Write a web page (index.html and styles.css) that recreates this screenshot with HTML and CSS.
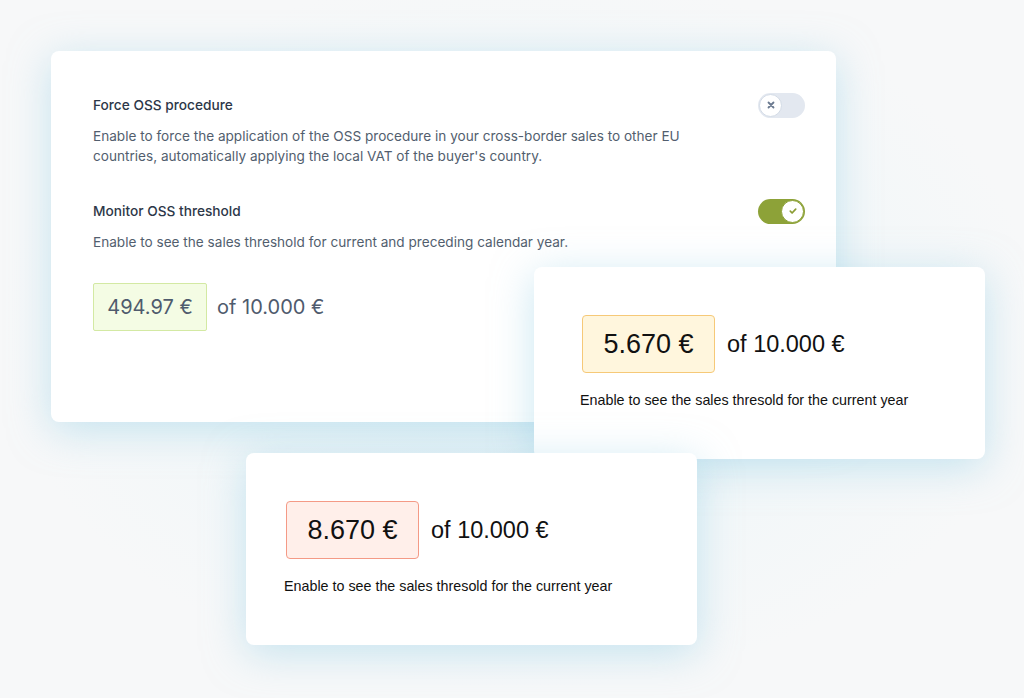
FILE: index.html
```html
<!DOCTYPE html>
<html>
	<head>
		<meta charset="UTF-8">
		<title>OSS settings</title>
		<link rel="stylesheet" href="styles.css">
	</head>
	<body>
		<div class="stage">
			<div class="card card-main">
				<div class="row">
					<div class="title">Force OSS procedure</div>
					<div class="toggle">
						<span class="knob">
							<svg width="10" height="10" viewBox="0 0 10 10"><path d="M2.5 2.5l5 5M7.5 2.5l-5 5" stroke="#6b7a90" stroke-width="1.8" stroke-linecap="round"/></svg>
						</span>
					</div>
				</div>
				<p class="desc">Enable to force the application of the OSS procedure in your cross-border sales to other EU countries, automatically applying the local VAT of the buyer's country.</p>

				<div class="row row2">
					<div class="title">Monitor OSS threshold</div>
					<div class="toggle on">
						<span class="knob">
							<svg width="10" height="10" viewBox="0 0 10 10"><path d="M2.3 5.2l1.8 1.8 3.6-3.8" fill="none" stroke="#8b9c33" stroke-width="1.7" stroke-linecap="round" stroke-linejoin="round"/></svg>
						</span>
					</div>
				</div>
				<p class="desc">Enable to see the sales threshold for current and preceding calendar year.</p>

				<div class="amount">
					<span class="box box-green">494.97 €</span>
					<span class="of">of 10.000 €</span>
				</div>
			</div>

			<div class="card card-small card-yellow">
				<div class="amount amount-lg">
					<span class="box box-yellow">5.670 €</span>
					<span class="of">of 10.000 €</span>
				</div>
				<p class="note">Enable to see the sales thresold for the current year</p>
			</div>

			<div class="card card-small card-red">
				<div class="amount amount-lg">
					<span class="box box-red">8.670 €</span>
					<span class="of">of 10.000 €</span>
				</div>
				<p class="note">Enable to see the sales thresold for the current year</p>
			</div>
		</div>
	</body>
</html>
```

FILE: styles.css
```css
*{padding:0;margin:0;box-sizing:border-box;}
body{background:#f7f8f9;font-family:Inter,"Liberation Sans",sans-serif;overflow:hidden;}
.stage{position:relative;width:1024px;height:698px;background:radial-gradient(ellipse 520px 360px at 520px 330px,#e8f3f8 0%,#f2f7f9 60%,#f7f8f9 100%);}

.card{position:absolute;background:#fff;border-radius:8px;box-shadow:0 8px 40px rgba(150,208,230,0.5);}
.card-main{left:51px;top:51px;width:785px;height:371px;padding:42px 31px 0 42px;}
.card-small{width:451px;height:192px;padding:48px 0 0 48px;font-family:"Liberation Sans",Arial,sans-serif;}
.card-yellow{left:534px;top:267px;}
.card-red{left:246px;top:453px;padding-left:40px;}

.row{display:flex;align-items:center;justify-content:space-between;height:24px;}
.row2{margin-top:33px;}
.title{font-size:13.7px;font-weight:500;color:#2d3748;}
.desc{margin-top:9px;max-width:620px;font-size:13.6px;line-height:20px;color:#525e6e;}

.toggle{width:47px;height:25px;border-radius:13px;background:#e3e8f0;padding:1px;display:flex;}
.toggle .knob{width:23px;height:23px;border-radius:50%;background:#fff;border:1.5px solid #d3dbe6;display:flex;align-items:center;justify-content:center;}
.toggle.on{background:#8da238;justify-content:flex-end;}
.toggle.on .knob{border-color:#8da238;}

.amount{display:flex;align-items:center;margin-top:31px;}
.box{display:flex;align-items:center;justify-content:center;border:1px solid;border-radius:2px;}
.box-green{width:114px;height:48px;background:#f4fce4;border-color:#d3e9a3;font-size:20px;color:#4f5b6d;}
.amount .of{margin-left:10px;font-size:20px;color:#4f5b6d;}

.amount-lg{margin-top:0;}
.amount-lg .box{width:133px;height:58px;border-radius:4px;font-size:27px;color:#111;}
.amount-lg .of{margin-left:12px;font-size:23.5px;color:#111;}
.box-yellow{background:#fff6dd;border-color:#f6c978;}
.box-red{background:#ffefea;border-color:#f49a86;}
.note{margin-top:17px;margin-left:-2px;font-size:14.3px;line-height:20px;color:#111;}
```
